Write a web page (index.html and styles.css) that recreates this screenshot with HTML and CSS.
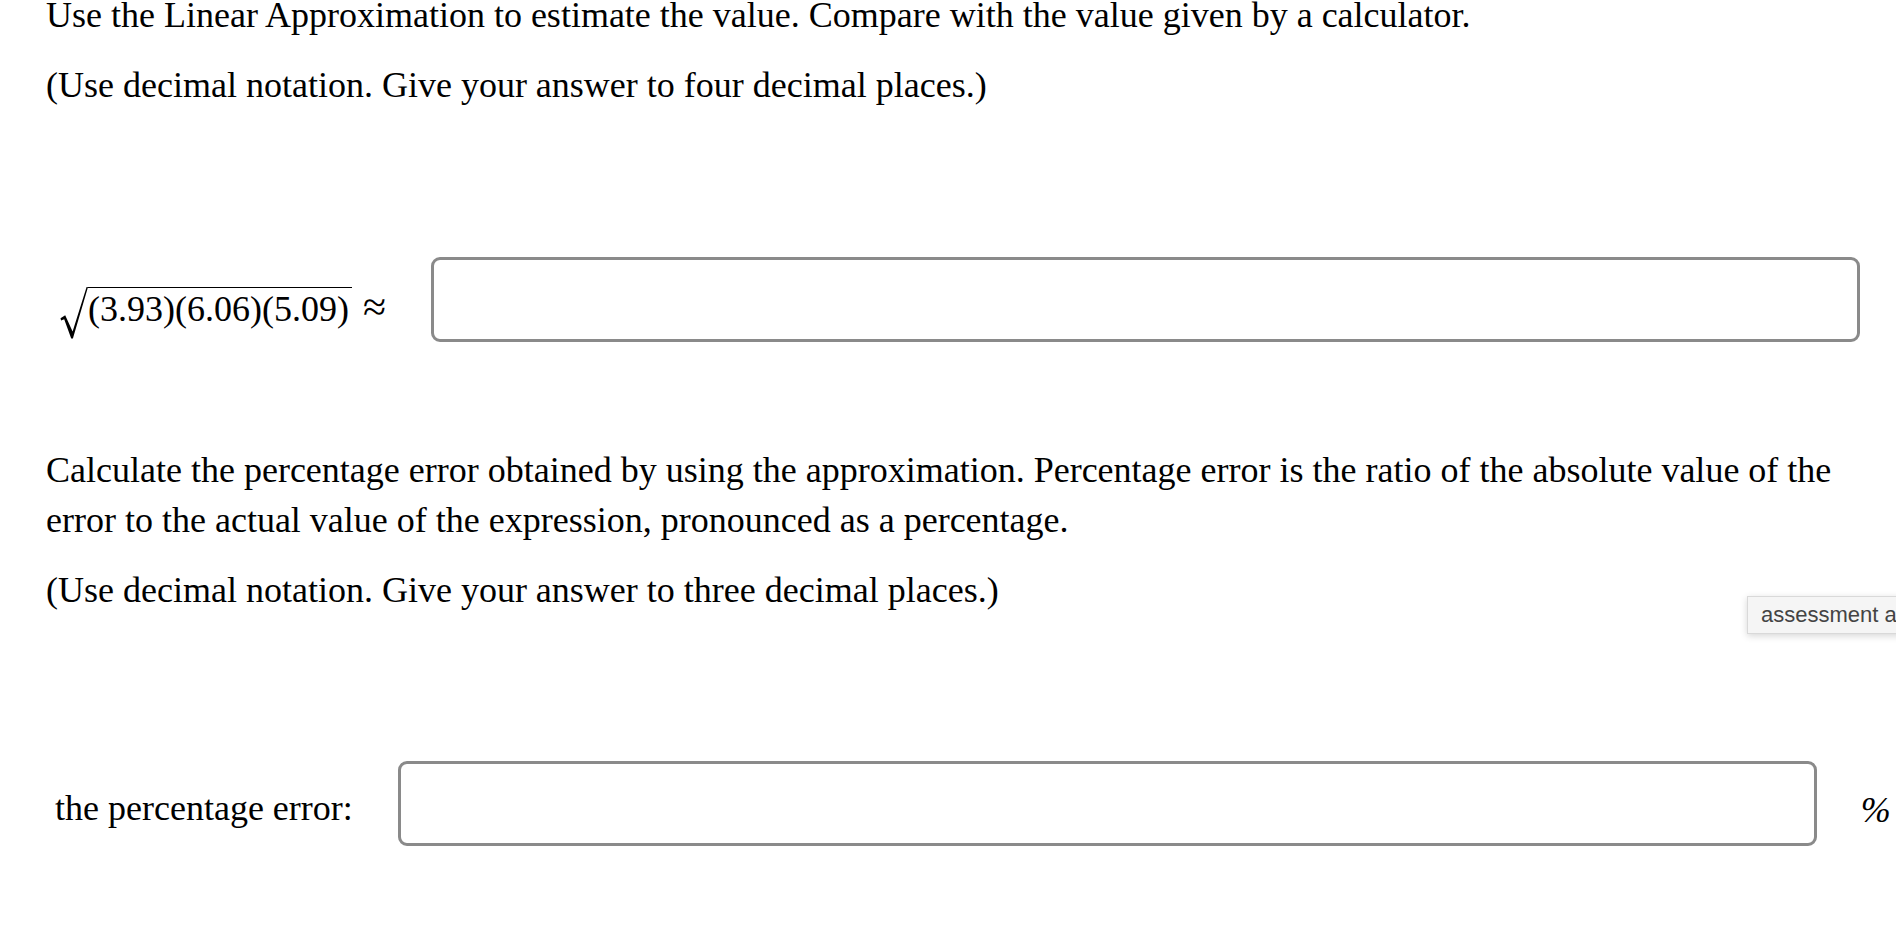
FILE: index.html
```html
<!DOCTYPE html>
<html lang="en">
<head>
<meta charset="utf-8">
<title>Linear Approximation</title>
<link rel="stylesheet" href="styles.css">
</head>
<body>
<main class="page">
  <p class="q q-first">Use the Linear Approximation to estimate the value. Compare with the value given by a calculator.</p>
  <p class="q">(Use decimal notation. Give your answer to four decimal places.)</p>

  <div class="row row-math">
    <div class="expr">
      <svg class="surd" width="28" height="52" viewBox="0 0 28 52" aria-hidden="true">
        <path d="M0.5 31.2 L5.2 28.2 L12.6 44.6 L26.6 0 L28 0 L12.9 51.5 L11.2 51.5 L4.2 32.2 L1.1 33.6 Z" fill="#000"/>
      </svg><span class="radicand">(3.93)(6.06)(5.09)</span><span class="approx">≈</span>
    </div>
    <div class="field field-a"></div>
  </div>

  <p class="q q-gap">Calculate the percentage error obtained by using the approximation. Percentage error is the ratio of the absolute value of the error to the actual value of the expression, pronounced as a percentage.</p>
  <p class="q">(Use decimal notation. Give your answer to three decimal places.)</p>

  <div class="row row-pct">
    <span class="label">the percentage error:</span>
    <div class="field field-b"></div>
    <span class="unit">%</span>
  </div>
</main>
<div class="tip">assessment answer</div>
</body>
</html>
```

FILE: styles.css
```css
html, body {
  margin: 0;
  padding: 0;
  overflow: hidden;
  background: #fff;
}

body {
  position: relative;
  width: 1896px;
  height: 950px;
  font-family: "Liberation Serif", "Times New Roman", Times, serif;
  font-size: 36px;
  line-height: 50px;
  color: #000;
}

.page {
  padding: 0 26px 0 46px;
}

.q {
  margin: 0 0 20px 0;
}

.q-first {
  margin-top: -10px;
}

.row {
  display: flex;
  align-items: flex-start;
}

.row-math {
  margin-top: 147px;
}

.expr {
  display: flex;
  align-items: flex-start;
  margin-top: 30px;
  margin-left: 14px;
}

.surd {
  display: block;
  flex: none;
}

.radicand {
  display: block;
  border-top: 1.5px solid #000;
  padding: 3px 3px 0 0;
  line-height: 36px;
  white-space: nowrap;
}

.approx {
  display: block;
  margin-left: 11px;
  margin-top: 2px;
  font-size: 42px;
  line-height: 36px;
}

.field {
  box-sizing: border-box;
  height: 85px;
  border: 3.5px solid #8a8a8a;
  border-radius: 9px;
  background: #fff;
  flex: none;
}

.field-a {
  width: 1429px;
  margin-left: 45px;
}

.q-gap {
  margin-top: 103px;
}

.row-pct {
  margin-top: 146px;
}

.label {
  margin-top: 22px;
  margin-left: 9px;
  white-space: nowrap;
}

.field-b {
  width: 1419px;
  margin-left: 45px;
}

.unit {
  margin-top: 24px;
  margin-left: 44px;
  font-style: italic;
}

.tip {
  position: absolute;
  left: 1747px;
  top: 596px;
  box-sizing: border-box;
  height: 38px;
  padding: 0 40px 0 13px;
  background: #f5f5f5;
  border: 1px solid #d9d9d9;
  box-shadow: 0 2px 7px rgba(0, 0, 0, 0.16);
  font-family: "Liberation Sans", Arial, Helvetica, sans-serif;
  font-size: 22px;
  line-height: 36px;
  color: #444;
  white-space: nowrap;
}
```
